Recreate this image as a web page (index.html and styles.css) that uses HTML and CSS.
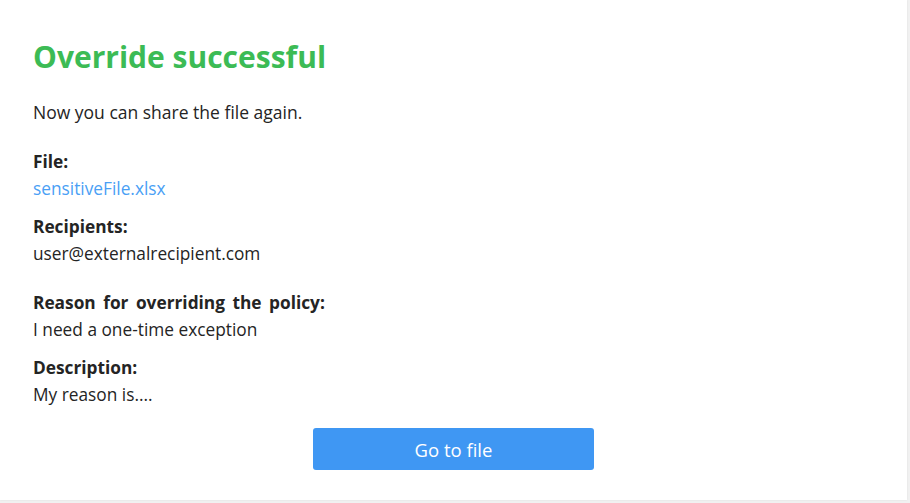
FILE: index.html
```html
<!DOCTYPE html>
<html lang="en">
<head>
<meta charset="utf-8">
<title>Override successful</title>
<link rel="stylesheet" href="styles.css">
</head>
<body>
<main class="card">
  <h1 class="title">Override successful</h1>
  <p class="intro">Now you can share the file again.</p>
  <section class="field">
    <div class="label">File:</div>
    <a class="value link" href="#">sensitiveFile.xlsx</a>
  </section>
  <section class="field">
    <div class="label">Recipients:</div>
    <div class="value">user@externalrecipient.com</div>
  </section>
  <section class="field field-spaced">
    <div class="label">Reason for overriding the policy:</div>
    <div class="value">I need a one-time exception</div>
  </section>
  <section class="field">
    <div class="label">Description:</div>
    <div class="value">My reason is....</div>
  </section>
  <div class="actions">
    <button class="btn" type="button">Go to file</button>
  </div>
</main>
</body>
</html>
```
FILE: styles.css
```css
html, body {
  margin: 0;
  padding: 0;
  background: #f1f1f1;
}
body {
  font-family: "Open Sans", "Noto Sans", "Liberation Sans", sans-serif;
  color: #242424;
  width: 910px;
  height: 503px;
  overflow: hidden;
}
.card {
  box-sizing: border-box;
  width: 907px;
  height: 500px;
  background: #ffffff;
  padding: 24px 33px 0;
  box-shadow: 0 0 2px rgba(0,0,0,0.08);
}
.title {
  margin: 15px 0 0;
  font-size: 30px;
  line-height: 36px;
  font-weight: 700;
  color: #3cbb55;
}
.intro {
  margin: 24px 0 0;
  font-size: 17.5px;
  line-height: 27px;
}
.field {
  margin-top: 11px;
  font-size: 17.3px;
  line-height: 27px;
}
.intro + .field {
  margin-top: 22px;
}
.field-spaced {
  margin-top: 22px;
}
.label {
  font-weight: 700;
}
.field-spaced .label {
  word-spacing: 3px;
}
.value {
  display: block;
}
.link {
  color: #4a9ff5;
  text-decoration: none;
}
.actions {
  display: flex;
  justify-content: center;
  margin-top: 20px;
  margin-left: -33px;
  margin-right: -33px;
}
.btn {
  width: 281px;
  height: 42px;
  border: none;
  border-radius: 3px;
  background: #3f97f3;
  color: #ffffff;
  font-family: inherit;
  font-size: 18.5px;
  padding: 0;
  cursor: pointer;
}
```
